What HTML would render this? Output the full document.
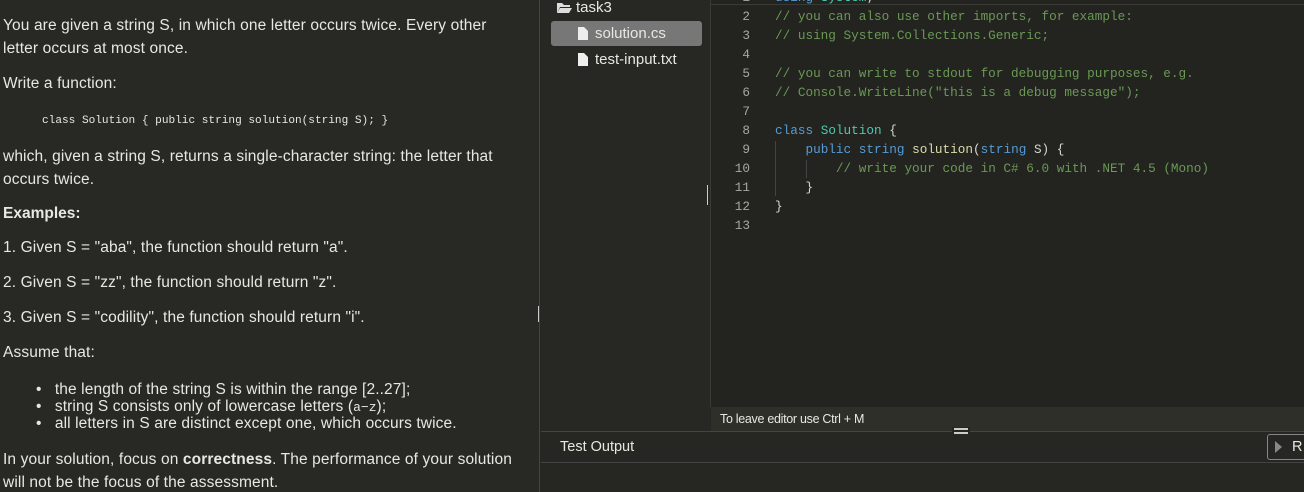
<!DOCTYPE html>
<html><head><style>
*{margin:0;padding:0;box-sizing:border-box}
body{width:1304px;height:492px;overflow:hidden;background:#262622;font-family:"Liberation Sans",sans-serif;color:#e8e8e2;position:relative}
.l{position:absolute;left:3px;font-size:15.5px;letter-spacing:0.12px;white-space:nowrap;line-height:18px}
.m{font-family:"Liberation Mono",monospace}
#left{position:absolute;left:0;top:0;width:540px;height:492px;background:#282824;border-right:1px solid #444}
#tree{position:absolute;left:541px;top:0;width:169px;height:431px;background:#272723}
#ed{position:absolute;left:710px;top:0;width:594px;height:407px;background:#232320;border-left:1px solid #3a3a36}
.c{position:absolute;left:775px;font-family:"Liberation Mono",monospace;font-size:12.7px;white-space:pre;line-height:19px;color:#d8d8d0}
.n{position:absolute;left:720px;width:30px;text-align:right;font-family:"Liberation Mono",monospace;font-size:12.7px;color:#a8a8a0;line-height:19px}
.cm{color:#6a9955}.kw{color:#569cd6}.ty{color:#4ec9b0}.fn{color:#dcdcaa}
</style></head><body>
<div id="left"></div>
<div class="l" style="top:17px">You are given a string S, in which one letter occurs twice. Every other</div>
<div class="l" style="top:40px">letter occurs at most once.</div>
<div class="l" style="top:75px">Write a function:</div>
<div class="l m" style="top:112px;left:42px;font-size:11.1px;letter-spacing:0">class Solution { public string solution(string S); }</div>
<div class="l" style="top:148px">which, given a string S, returns a single-character string: the letter that</div>
<div class="l" style="top:171px">occurs twice.</div>
<div class="l" style="top:205px;font-weight:bold;letter-spacing:0">Examples:</div>
<div class="l" style="top:239px">1. Given S = "aba", the function should return "a".</div>
<div class="l" style="top:274px">2. Given S = "zz", the function should return "z".</div>
<div class="l" style="top:309px">3. Given S = "codility", the function should return "i".</div>
<div class="l" style="top:344px">Assume that:</div>
<div class="l" style="top:381px;left:36px">•&nbsp;&nbsp;&nbsp;the length of the string S is within the range [2..27];</div>
<div class="l" style="top:398px;left:36px">•&nbsp;&nbsp;&nbsp;string S consists only of lowercase letters (<span class="m" style="font-size:13px;letter-spacing:0">a−z</span>);</div>
<div class="l" style="top:415px;left:36px">•&nbsp;&nbsp;&nbsp;all letters in S are distinct except one, which occurs twice.</div>
<div class="l" style="top:451px">In your solution, focus on <b>correctness</b>. The performance of your solution</div>
<div class="l" style="top:474px">will not be the focus of the assessment.</div>
<div style="position:absolute;left:538px;top:306px;width:4px;height:16px;border-left:1px solid #ccc;border-right:1px solid #ccc"></div>

<div id="tree"></div>
<svg style="position:absolute;left:556px;top:1px" width="16" height="13"><path d="M1 2h5l2 2h6v2H4L1 12z" fill="#ddd"/><path d="M4 7h12l-3 5H1z" fill="#ddd"/></svg>
<div class="l" style="top:-1px;left:576px;font-size:15px;letter-spacing:0">task3</div>
<div style="position:absolute;left:551px;top:21px;width:151px;height:25px;background:#777;border-radius:3px"></div>
<svg style="position:absolute;left:578px;top:27px" width="10" height="13"><path d="M0 0h6l4 4v9H0z" fill="#eee"/></svg>
<div class="l" style="top:25px;left:595px;font-size:15px;letter-spacing:0">solution.cs</div>
<svg style="position:absolute;left:578px;top:53px" width="10" height="13"><path d="M0 0h6l4 4v9H0z" fill="#eee"/></svg>
<div class="l" style="top:51px;left:595px;font-size:15px;letter-spacing:0">test-input.txt</div>
<div style="position:absolute;left:707px;top:185px;width:4px;height:20px;border-left:1px solid #ccc;border-right:1px solid #ccc"></div>

<div id="ed"></div>
<div style="position:absolute;left:711px;top:0;width:593px;height:5px;border-bottom:1px solid #3a3a36"></div>
<div class="n" style="top:-12px">1</div>
<div class="c" style="top:-12px"><span class="kw">using</span> <span class="ty">System</span>;</div>
<div class="n" style="top:7px">2</div><div class="c cm" style="top:7px">// you can also use other imports, for example:</div>
<div class="n" style="top:26px">3</div><div class="c cm" style="top:26px">// using System.Collections.Generic;</div>
<div class="n" style="top:45px">4</div>
<div class="n" style="top:64px">5</div><div class="c cm" style="top:64px">// you can write to stdout for debugging purposes, e.g.</div>
<div class="n" style="top:83px">6</div><div class="c cm" style="top:83px">// Console.WriteLine("this is a debug message");</div>
<div class="n" style="top:102px">7</div>
<div class="n" style="top:121px">8</div><div class="c" style="top:121px"><span class="kw">class</span> <span class="ty">Solution</span> {</div>
<div class="n" style="top:140px">9</div><div class="c" style="top:140px">    <span class="kw">public</span> <span class="kw">string</span> <span class="fn">solution</span>(<span class="kw">string</span> S) {</div>
<div class="n" style="top:159px">10</div><div class="c" style="top:159px">        <span class="cm">// write your code in C# 6.0 with .NET 4.5 (Mono)</span></div>
<div class="n" style="top:178px">11</div><div class="c" style="top:178px">    }</div>
<div class="n" style="top:197px">12</div><div class="c" style="top:197px">}</div>
<div class="n" style="top:216px">13</div>
<div style="position:absolute;left:775px;top:141px;width:1px;height:55px;background:#444"></div>
<div style="position:absolute;left:806px;top:160px;width:1px;height:18px;background:#444"></div>

<div style="position:absolute;left:711px;top:407px;width:593px;height:24px;background:#2f2f29"></div>
<div class="l" style="top:410px;left:720px;font-size:12.5px;letter-spacing:-0.3px">To leave editor use Ctrl + M</div>
<div style="position:absolute;left:541px;top:431px;width:763px;height:1px;background:#444"></div>
<div style="position:absolute;left:952px;top:427px;width:18px;height:8px;background:#262622"></div>
<div style="position:absolute;left:954px;top:428px;width:14px;height:2px;background:#ccc"></div>
<div style="position:absolute;left:954px;top:432px;width:14px;height:2px;background:#ccc"></div>
<div class="l" style="top:438px;left:560px;font-size:14.5px;letter-spacing:0">Test Output</div>
<div style="position:absolute;left:541px;top:462px;width:763px;height:1px;background:#444"></div>
<div style="position:absolute;left:1267px;top:434px;width:50px;height:26px;border:1px solid #888;border-radius:3px"></div>
<svg style="position:absolute;left:1275px;top:441px" width="8" height="12"><path d="M0 0L7 6L0 12z" fill="#888"/></svg>
<div class="l" style="top:438px;left:1292px;font-size:14.5px;letter-spacing:0">R</div>
</body></html>
